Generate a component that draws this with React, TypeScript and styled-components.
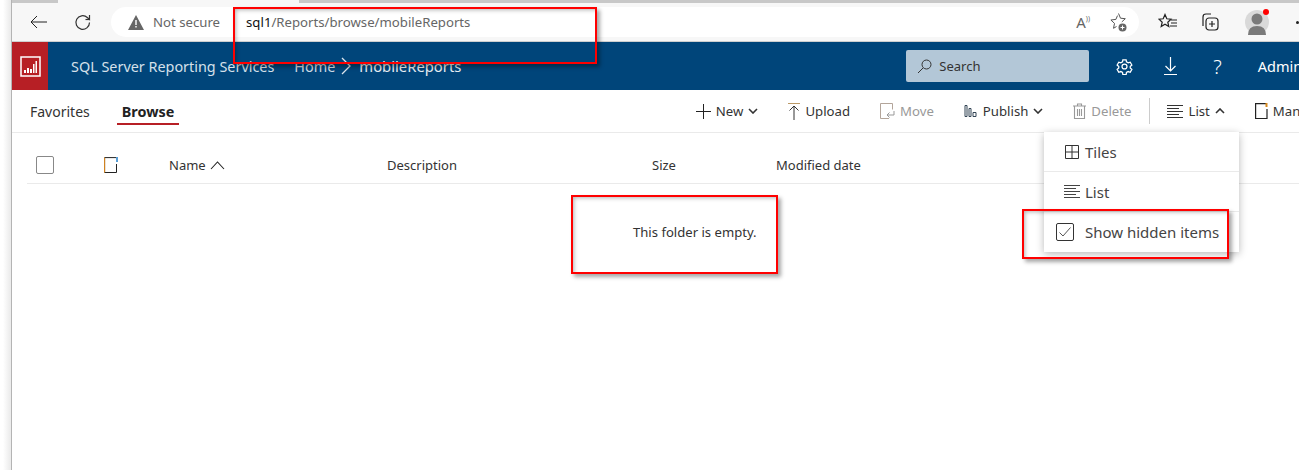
import { createGlobalStyle, styled } from 'styled-components';
import type { ReactNode } from 'react';

const FONT = `"Noto Sans", "Open Sans", "Liberation Sans", sans-serif`;

const GlobalStyle = createGlobalStyle`
  html, body {
    margin: 0;
    height: 100%;
    background: #fff;
    overflow: hidden;
  }
  #root {
    height: 100%;
  }
`;

const Line = ({ children, w = 16, h = 16, sw = 1, color = 'currentColor' }: { children: ReactNode; w?: number; h?: number; sw?: number; color?: string }) => (
  <svg width={w} height={h} viewBox={`0 0 ${w} ${h}`} fill="none" stroke={color} strokeWidth={sw}>
    {children}
  </svg>
);

const Chevron = ({ up = false }: { up?: boolean }) => (
  <Line w={10} h={6} sw={1.6}>
    <path d={up ? 'M1 5l4-4 4 4' : 'M1 1l4 4 4-4'} />
  </Line>
);

const ListLines = () => (
  <Line w={16} h={13}>
    <path d="M0 .5h16M0 3.5h12M0 6.5h16M0 9.5h12M0 12.5h16" />
  </Line>
);

const MARKS = [
  { x: 233, y: 7, w: 364, h: 57 },
  { x: 571, y: 195, w: 207, h: 79 },
  { x: 1022, y: 209, w: 207, h: 50 },
];

export default function App() {
  return (
    <Page>
      <GlobalStyle />
      <Gutter />
      <Main>
        <TabStrip>
          <TabGap />
        </TabStrip>
        <BrowserBar>
          <NavButton>
            <Line w={18} h={14} color="#222">
              <path d="M17 7H1M7 1L1 7l6 6" />
            </Line>
          </NavButton>
          <NavButton>
            <Line w={18} h={18} color="#333" sw={1.2}>
              <path d="M15.500 9.500a6.800 6.800 0 1 1-2.200-5L15.500 6.500V2" />
              <path d="M15.500 6.500h-4" />
            </Line>
          </NavButton>
          <AddressBar>
            <Warning>
              <svg width="16" height="15" viewBox="0 0 16 15">
                <path d="M8 0l8 15H0z" fill="#666" />
                <path d="M7.300 5h1.400v5H7.300zM7.300 11h1.400v1.600H7.300z" fill="#fff" />
              </svg>
              Not secure
            </Warning>
            <Url>
              <b>sql1</b>/Reports/browse/mobileReports
            </Url>
            <AddressIcons>
              <ReadAloud>A<small>))</small></ReadAloud>
              <Line w={20} h={20} color="#555">
                <path d="M11.500 1.500l2 4.700 4.800.5-3.500 3.200" />
                <path d="M10.500 15.500l-3 1.800 1-4.900-3.600-3.400 5-.6 1.600-3.800" transform="translate(-1 -1)" />
                <circle cx="15.500" cy="15.500" r="4" fill="#666" stroke="none" />
                <path d="M13.500 15.500h4M15.500 13.500v4" stroke="#fff" />
              </Line>
            </AddressIcons>
          </AddressBar>
          <BrowserIcons>
            <Line w={20} h={18} color="#222" sw={1.2}>
              <path d="M7 1.500l1.800 4.300 4.200.4-3.200 3 1 4.400L7 11.300l-3.800 2.300 1-4.400L1 6.200l4.200-.4z" />
              <path d="M13 7h6M13 10h6M12 13h7" />
            </Line>
            <Line w={20} h={20} color="#222" sw={1.2}>
              <path d="M4 14V5q0-3 3-3h5" />
              <rect x="7" y="6" width="12" height="12" rx="3" />
              <path d="M13 9v6M10 12h6" />
            </Line>
            <Avatar>
              <svg width="22" height="26" viewBox="0 0 22 26">
                <circle cx="11" cy="9" r="5.500" fill="#7a7a7a" />
                <path d="M2 25q0-9 9-9t9 9z" fill="#7a7a7a" />
              </svg>
              <Badge />
            </Avatar>
            <Ellipsis />
          </BrowserIcons>
        </BrowserBar>

        <Header>
          <Logo>
            <svg width="21" height="21" viewBox="0 0 21 21">
              <rect x="1" y="1" width="19" height="19" fill="none" stroke="#fff" strokeWidth="1.500" />
              <path d="M4 14h2v3H4zM7 12h2v5H7zM10 13h2v4h-2zM13 8h1.500v9H13zM15.500 5H17v12h-1.500z" fill="#fff" />
            </svg>
          </Logo>
          <ProductName>SQL Server Reporting Services</ProductName>
          <Crumb>Home</Crumb>
          <CrumbSep>
            <Line w={10} h={18} color="#dbe4ec" sw={1.3}>
              <path d="M1 1l8 8-8 8" />
            </Line>
          </CrumbSep>
          <CrumbCurrent>mobileReports</CrumbCurrent>
          <SearchBox>
            <Line w={15} h={15} color="#333">
              <circle cx="9.500" cy="5.500" r="4.500" />
              <path d="M6 9l-5 5" />
            </Line>
            Search
          </SearchBox>
          <HeaderIcon>
            <svg width="17" height="17" viewBox="0 0 24 24" fill="none" stroke="#fff" strokeWidth="1.800">
              <path d="M9.700 2.500l-.5 3-2.400 1.400-2.900-1-2.300 4 2.300 2v2.200l-2.300 2 2.300 4 2.900-1 2.400 1.400.5 3h4.600l.5-3 2.400-1.400 2.900 1 2.300-4-2.300-2v-2.200l2.300-2-2.300-4-2.900 1-2.400-1.400-.5-3z" />
              <circle cx="12" cy="12" r="3.500" />
            </svg>
          </HeaderIcon>
          <DownloadIcon>
            <Line w={13} h={18} color="#fff" sw={1.200}>
              <path d="M6.500 0v14M1.500 9l5 5 5-5M0 17.500h13" />
            </Line>
          </DownloadIcon>
          <HelpIcon>?</HelpIcon>
          <UserName>Admin</UserName>
        </Header>

        <CommandBar>
          <Tabs>
            <Tab>Favorites</Tab>
            <Tab $active>Browse</Tab>
          </Tabs>
          <Commands>
            <Command>
              <Line w={15} h={15} color="#222">
                <path d="M7.500 0v15M0 7.500h15" />
              </Line>
              New
              <Chevron />
            </Command>
            <Command>
              <Line w={12} h={17} color="#c55">
                <path d="M0 .5h12" stroke="#b96" />
                <path d="M6 17V3M1.500 7.500L6 3l4.500 4.500" stroke="#333" />
              </Line>
              Upload
            </Command>
            <Command $disabled>
              <Line w={15} h={16} color="#999">
                <path d="M9 15.500H.5V.5h12v6" stroke="#b3a59a" />
                <path d="M14 8v4H7M9.500 9.500L7 12l2.500 2.500" />
              </Line>
              Move
            </Command>
            <Command>
              <svg width="14" height="12" viewBox="0 0 14 12" fill="none" stroke="#345" strokeWidth="1">
                <path d="M1 .5h2v11H1zM5 3.500h2v8H5zM9 7.500h3v4H9z" />
              </svg>
              Publish
              <Chevron />
            </Command>
            <Command $disabled $last>
              <Line w={13} h={16} color="#999" sw={1.100}>
                <path d="M0 3h13M4.500 3V1h4v2M1.500 3v12.500h10V3M4.500 6v7M6.500 6v7M8.500 6v7" />
              </Line>
              Delete
            </Command>
            <Divider />
            <Command>
              <ListLines />
              List
              <Chevron up />
            </Command>
            <Command>
              <Line w={13} h={16} color="#222" sw={1.200}>
                <path d="M12 6v9.500H.6V.6H12" />
                <path d="M11.500 0v4" stroke="#d88a1c" strokeWidth="2" />
              </Line>
              Manage
            </Command>
          </Commands>
        </CommandBar>
        <Rule />

        <TableHead>
          <CheckCol>
            <Checkbox />
          </CheckCol>
          <TypeCol>
            <svg width="15" height="16" viewBox="0 0 15 16" fill="none">
              <path d="M12.500 7v8.500H.6V.6h11.900" stroke="#222" />
              <path d="M.6.6v15" stroke="#e08a1e" />
              <path d="M13 0v5" stroke="#5a9fd6" strokeWidth="2" />
            </svg>
          </TypeCol>
          <NameCol>
            Name
            <Line w={15} h={9} color="#222" sw={1.100}>
              <path d="M1 8l6.500-7L14 8" />
            </Line>
          </NameCol>
          <DescCol>Description</DescCol>
          <SizeCol>Size</SizeCol>
          <DateCol>Modified date</DateCol>
        </TableHead>
        <EmptyText>This folder is empty.</EmptyText>
      </Main>

      <Menu>
        <TilesItem>
          <Line w={14} h={14} color="#333">
            <path d="M.5.5h13v13H.5zM7 .5v13M.5 7h13" />
          </Line>
          Tiles
        </TilesItem>
        <MenuItem>
          <ListLines />
          List
        </MenuItem>
        <HiddenItem>
          <MenuCheck>
            <Line w={12} h={10} color="#555">
              <path d="M.5 5.500L4 9l7.500-8.500" />
            </Line>
          </MenuCheck>
          Show hidden items
        </HiddenItem>
      </Menu>

      {MARKS.map((m) => (
        <RedBox key={m.x} style={{ left: m.x, top: m.y, width: m.w, height: m.h }} />
      ))}
    </Page>
  );
}

const Page = styled.div`
  position: relative;
  display: flex;
  width: 1299px;
  height: 470px;
  overflow: hidden;
  font-family: ${FONT};
  color: #333;
`;

const Gutter = styled.div`
  flex: 0 0 11px;
  background: linear-gradient(to right, #fff 0, #fff 3px, #ececec 10px);
  border-right: 1px solid #b4b4b4;
`;

const Main = styled.div`
  flex: 1;
  min-width: 0;
  display: flex;
  flex-direction: column;
`;

const TabStrip = styled.div`
  height: 3px;
  padding-left: 46px;
  background: #c8c8c8;
`;

const TabGap = styled.div`
  width: 241px;
  height: 3px;
  background: #f7f7f7;
`;

const BrowserBar = styled.div`
  height: 38px;
  display: flex;
  align-items: center;
  padding-left: 9px;
  background: #f7f7f7;
  border-bottom: 1px solid #cfcfcf;
`;

const NavButton = styled.div`
  width: 38px;
  height: 36px;
  margin-right: 8px;
  display: flex;
  align-items: center;
  justify-content: center;
`;

const AddressBar = styled.div`
  width: 1028px;
  height: 30px;
  margin-left: 2px;
  flex: none;
  border-radius: 15px;
  background: #fff;
  display: flex;
  align-items: center;
  padding: 0 12px 0 17px;
  box-sizing: border-box;
  font-size: 13.200px;
`;

const Warning = styled.div`
  display: flex;
  align-items: center;
  gap: 9px;
  color: #666;
`;

const Url = styled.div`
  margin-left: 26px;
  color: #666;
  flex: 1;
  b {
    color: #111;
    font-weight: 400;
  }
`;

const AddressIcons = styled.div`
  display: flex;
  align-items: center;
  gap: 17px;
`;

const ReadAloud = styled.span`
  font-size: 15px;
  color: #666;
  small {
    font-size: 7px;
    vertical-align: 7px;
  }
`;

const BrowserIcons = styled.div`
  display: flex;
  align-items: center;
  gap: 21px;
  margin-left: 19px;
`;

const Avatar = styled.div`
  position: relative;
  width: 24px;
  height: 24px;
  margin-left: 5px;
  border-radius: 50%;
  background: #d9d9d9;
  display: flex;
  justify-content: center;
  overflow: visible;
`;

const Badge = styled.span`
  position: absolute;
  top: -1px;
  right: 0;
  width: 6px;
  height: 6px;
  border-radius: 50%;
  background: #f00;
`;

const Ellipsis = styled.span`
  width: 3px;
  height: 3px;
  margin-left: 6px;
  border-radius: 50%;
  background: #222;
  flex: none;
`;

const Header = styled.div`
  height: 48px;
  display: flex;
  align-items: center;
  background: #00457a;
  color: #fff;
  white-space: nowrap;
`;

const Logo = styled.div`
  width: 36px;
  height: 48px;
  flex: none;
  display: flex;
  align-items: center;
  justify-content: center;
  background: #b71f25;
`;

const ProductName = styled.span`
  margin-left: 23px;
  font-size: 14.400px;
  color: #d5e0ea;
`;

const Crumb = styled.span`
  margin-left: 20px;
  font-size: 14.400px;
  color: #cfdbe6;
`;

const CrumbSep = styled.span`
  margin: 0 8px 0 6px;
  display: flex;
`;

const CrumbCurrent = styled.span`
  font-size: 14.800px;
  color: #e8eef3;
`;

const SearchBox = styled.div`
  width: 183px;
  height: 32px;
  margin-left: 445px;
  flex: none;
  box-sizing: border-box;
  padding-left: 11px;
  display: flex;
  align-items: center;
  gap: 7px;
  border-radius: 2px;
  background: #b3c7d7;
  color: #333;
  font-size: 13px;
`;

const HeaderIcon = styled.div`
  width: 17px;
  display: flex;
  justify-content: center;
  margin-left: 27px;
`;

const DownloadIcon = styled(HeaderIcon)`
  margin-left: 31px;
`;

const HelpIcon = styled.div`
  margin-left: 36px;
  width: 10px;
  font-size: 20px;
  font-weight: 300;
`;

const UserName = styled.span`
  margin-left: 36px;
  font-size: 14.500px;
`;

const CommandBar = styled.div`
  height: 42px;
  display: flex;
  align-items: center;
  white-space: nowrap;
`;

const Tabs = styled.div`
  display: flex;
  align-items: center;
  gap: 32px;
  margin: 2px 0 0 18px;
`;

const Tab = styled.span<{ $active?: boolean }>`
  position: relative;
  font-size: ${({ $active }) => ($active ? 14.4 : 14)}px;
  line-height: 20px;
  font-weight: ${({ $active }) => ($active ? 700 : 400)};
  color: ${({ $active }) => ($active ? '#222' : '#333')};

  &::after {
    content: '';
    display: ${({ $active }) => ($active ? 'block' : 'none')};
    position: absolute;
    left: -5px;
    right: -5px;
    bottom: -3px;
    height: 2px;
    background: #b71f25;
  }
`;

const Commands = styled.div`
  display: flex;
  align-items: center;
  margin-left: 521.500px;
`;

const Command = styled.div<{ $disabled?: boolean; $last?: boolean }>`
  display: flex;
  align-items: center;
  gap: 5px;
  margin-right: ${({ $last }) => ($last ? 18 : 30)}px;
  font-size: 13.200px;
  color: ${({ $disabled }) => ($disabled ? '#999' : '#333')};
`;

const Divider = styled.div`
  width: 1px;
  height: 26px;
  margin-right: 17px;
  background: #ccc;
`;

const Rule = styled.div`
  height: 1px;
  background: #eaeaea;
`;

const TableHead = styled.div`
  height: 51px;
  margin-left: 15px;
  padding-top: 14px;
  box-sizing: border-box;
  display: flex;
  align-items: center;
  border-bottom: 1px solid #eaeaea;
  font-size: 13px;
  color: #333;
`;

const CheckCol = styled.div`
  width: 77px;
  padding-left: 9px;
  box-sizing: border-box;
  display: flex;
`;

const Checkbox = styled.span`
  width: 16px;
  height: 16px;
  border: 1px solid #888;
  border-radius: 2px;
`;

const TypeCol = styled.div`
  width: 65px;
  display: flex;
`;

const NameCol = styled.div`
  width: 218px;
  display: flex;
  align-items: center;
  gap: 4px;
`;

const DescCol = styled.div`
  width: 265px;
`;

const SizeCol = styled.div`
  width: 124px;
`;

const DateCol = styled.div`
  flex: 1;
`;

const EmptyText = styled.div`
  margin: 39px 0 0 621px;
  font-size: 13.100px;
  color: #333;
`;

const Menu = styled.div`
  position: absolute;
  left: 1044px;
  top: 132px;
  width: 195px;
  background: #fff;
  box-shadow: 0 2px 8px rgba(0, 0, 0, 0.28);
  font-size: 15px;
  color: #444;
`;

const MenuItem = styled.div`
  height: 40px;
  box-sizing: border-box;
  padding-left: 20px;
  display: flex;
  align-items: center;
  gap: 5px;
  border-bottom: 1px solid #eaeaea;
`;

const TilesItem = styled(MenuItem)`
  padding-left: 21px;
  gap: 6px;
`;

const HiddenItem = styled(MenuItem)`
  padding-left: 12px;
  gap: 11px;
  border-bottom: 0;
`;

const MenuCheck = styled.span`
  width: 16px;
  height: 16px;
  border: 1px solid #333;
  border-radius: 2px;
  display: flex;
  align-items: center;
  justify-content: center;
`;

const RedBox = styled.div`
  position: absolute;
  box-sizing: border-box;
  border: 2px solid #f00;
  box-shadow: 3px 3px 4px rgba(0, 0, 0, 0.35), inset 3px 3px 4px -2px rgba(0, 0, 0, 0.3);
`;
